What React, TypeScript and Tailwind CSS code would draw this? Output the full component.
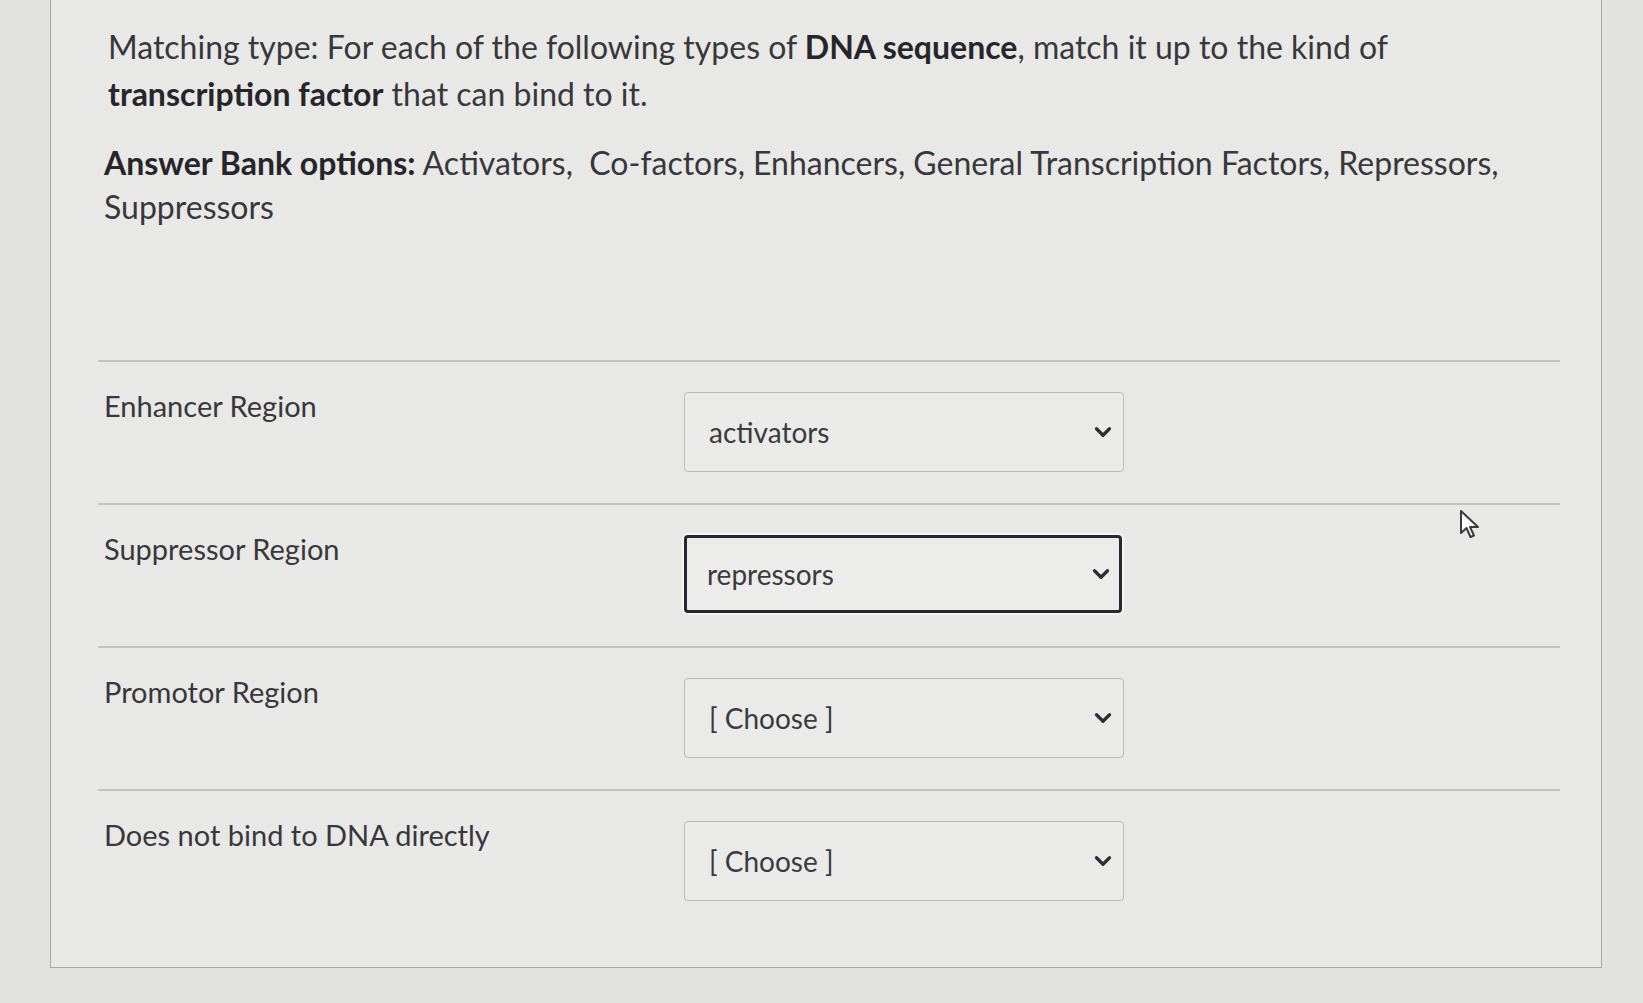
import { ChevronDown } from 'lucide-react';

const rows = [
  { label: 'Enhancer Region', value: 'activators', focused: false },
  { label: 'Suppressor Region', value: 'repressors', focused: true },
  { label: 'Promotor Region', value: '[ Choose ]', focused: false },
  { label: 'Does not bind to DNA directly', value: '[ Choose ]', focused: false },
];

function SelectBox({ value, focused }: { value: string; focused: boolean }) {
  return (
    <div
      className={
        focused
          ? 'flex items-center justify-between w-[438px] h-[78px] rounded-[4px] border-[3px] border-[#2b2532] bg-[#ececea] pl-[20px] pr-[5px] shadow-[0_0_0_2px_#f4f4f2]'
          : 'flex items-center justify-between w-[440px] h-[80px] rounded-[4px] border border-[#b9b9b7] bg-[#eaeae8] pl-[24px] pr-[7px]'
      }
    >
      <span className="text-[28px] text-[#3b3a3e]">{value}</span>
      <ChevronDown className="w-[26px] h-[26px] text-[#2f2c33]" strokeWidth={3} />
    </div>
  );
}

export default function App() {
  return (
    <div
      className="relative w-[1643px] h-[1003px] overflow-hidden bg-[#e2e2e0]"
      style={{ fontFamily: 'Lato, "Open Sans", sans-serif' }}
    >
      <div className="ml-[50px] w-[1552px] h-[970px] -mt-[2px] border-l border-r border-b border-[#a8a8a8] bg-[#e8e8e6] pt-[25px]">
        {/* Question text */}
        <div className="pl-[57px] pr-[60px] text-[32px] leading-[47px] text-[#38373b]">
          <p>
            Matching type: For each of the following types of <b className="font-bold text-[#26252a]">DNA sequence</b>, match it up to the kind of
            <br />
            <b className="font-bold text-[#26252a]">transcription factor</b> that can bind to it.
          </p>
          <p className="mt-[24px] -ml-[4px] leading-[44px]">
            <b className="font-bold text-[#26252a]">Answer Bank options:</b> Activators,&nbsp; Co-factors, Enhancers, General Transcription Factors, Repressors,
            <br />
            Suppressors
          </p>
        </div>

        {/* Matching rows */}
        <div className="mt-[131px] pl-[47px] pr-[41px]">
          {rows.map((r) => (
            <div key={r.label} className="flex border-t-2 border-[#c3c3c1] h-[143px] pt-[30px]">
              <div className="w-[586px] pl-[6px] -mt-[2px] text-[29px] leading-[32px] text-[#38373b]">{r.label}</div>
              <SelectBox value={r.value} focused={r.focused} />
            </div>
          ))}
        </div>
      </div>

      {/* mouse cursor */}
      <svg className="absolute left-[1459px] top-[509px]" width="22" height="30" viewBox="0 0 22 30">
        <path d="M2 2 L2 24 L7.5 19 L11.5 28 L15 26.5 L11 18 L19 18 Z" fill="#ffffff" stroke="#3a3a40" strokeWidth="2" strokeLinejoin="round" />
      </svg>
    </div>
  );
}
